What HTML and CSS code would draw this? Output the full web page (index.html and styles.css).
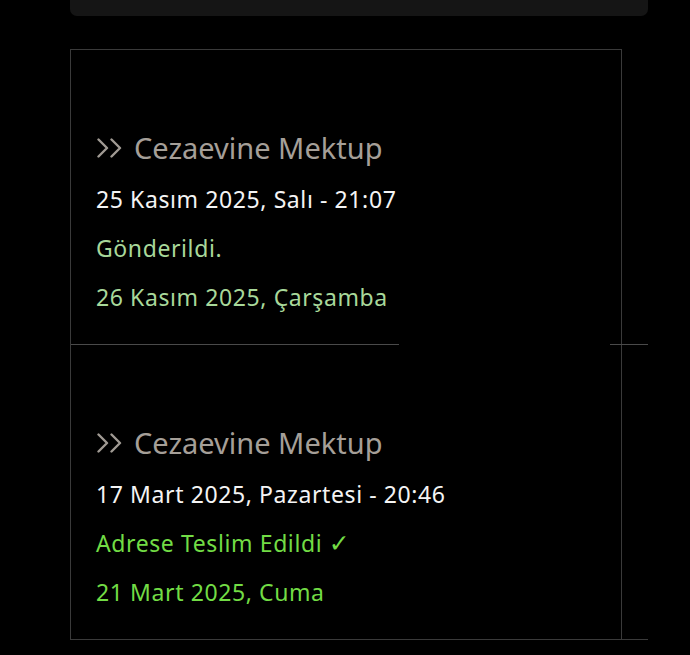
FILE: index.html
```html
<!DOCTYPE html>
<html lang="tr">
<head>
    <meta charset="UTF-8">
    <meta name="viewport" content="width=device-width, initial-scale=1.0">
    <title>Mektup Takip</title>
    <link rel="stylesheet" href="styles.css">
</head>
<body>
    <div class="wrap">
        <div class="topbar"></div>
        <div class="panel">
            <div class="list">
                <div class="entry">
                    <h3 class="entry-title">
                        <svg class="chevrons" viewBox="0 0 28 20" width="28" height="20">
                            <path d="M2.5 1.5 L11 10 L2.5 18.5 M15.5 1.5 L24 10 L15.5 18.5" fill="none" stroke="currentColor" stroke-width="2.4" stroke-linecap="round" stroke-linejoin="round"/>
                        </svg>
                        Cezaevine Mektup
                    </h3>
                    <div class="entry-date">25 Kasım 2025, Salı - 21:07</div>
                    <div class="entry-status pale">Gönderildi.</div>
                    <div class="entry-status pale">26 Kasım 2025, Çarşamba</div>
                </div>
                <div class="divider">
                    <span class="seg-long"></span>
                    <span class="seg-short"></span>
                </div>
                <div class="entry">
                    <h3 class="entry-title">
                        <svg class="chevrons" viewBox="0 0 28 20" width="28" height="20">
                            <path d="M2.5 1.5 L11 10 L2.5 18.5 M15.5 1.5 L24 10 L15.5 18.5" fill="none" stroke="currentColor" stroke-width="2.4" stroke-linecap="round" stroke-linejoin="round"/>
                        </svg>
                        Cezaevine Mektup
                    </h3>
                    <div class="entry-date">17 Mart 2025, Pazartesi - 20:46</div>
                    <div class="entry-status bright">Adrese Teslim Edildi <span class="check">✓</span></div>
                    <div class="entry-status bright">21 Mart 2025, Cuma</div>
                </div>
            </div>
        </div>
    </div>
</body>
</html>
```

FILE: styles.css
```css
body {
    margin: 0;
    background-color: #000;
    font-family: "Noto Sans", "Open Sans", sans-serif;
}
.wrap {
    width: 578px;
    margin-left: 70px;
}
.topbar {
    height: 16px;
    background-color: #151515;
    border-radius: 0 0 7px 7px;
}
.panel {
    margin-top: 33px;
    border-left: 1px solid #3a3a3a;
    border-bottom: 1px solid #3a3a3a;
}
.list {
    width: 550px;
    border-top: 1px solid #3a3a3a;
    border-right: 1px solid #3a3a3a;
}
.entry {
    height: 294px;
    padding: 76px 0 0 25px;
    box-sizing: border-box;
}
.entry-title {
    display: flex;
    align-items: center;
    gap: 10px;
    margin: 0 0 5px;
    font-size: 29px;
    font-weight: normal;
    line-height: 44px;
    color: #a59f98;
}
.chevrons {
    color: #a09a93;
}
.entry-date {
    font-size: 23px;
    letter-spacing: 0.6px;
    line-height: 49px;
    color: #f4f4f4;
}
.entry-status {
    font-size: 23px;
    letter-spacing: 0.6px;
    line-height: 49px;
}
.check {
    font-family: "DejaVu Sans", sans-serif;
    font-weight: bold;
    font-size: 25px;
}
.pale {
    color: #a8d89a;
}
.bright {
    color: #72dc45;
}
.divider {
    display: flex;
    justify-content: space-between;
    height: 1px;
}
.seg-long {
    width: 328px;
    background-color: #4a4a4a;
}
.seg-short {
    width: 38px;
    margin-right: -27px;
    background-color: #4a4a4a;
}
```
